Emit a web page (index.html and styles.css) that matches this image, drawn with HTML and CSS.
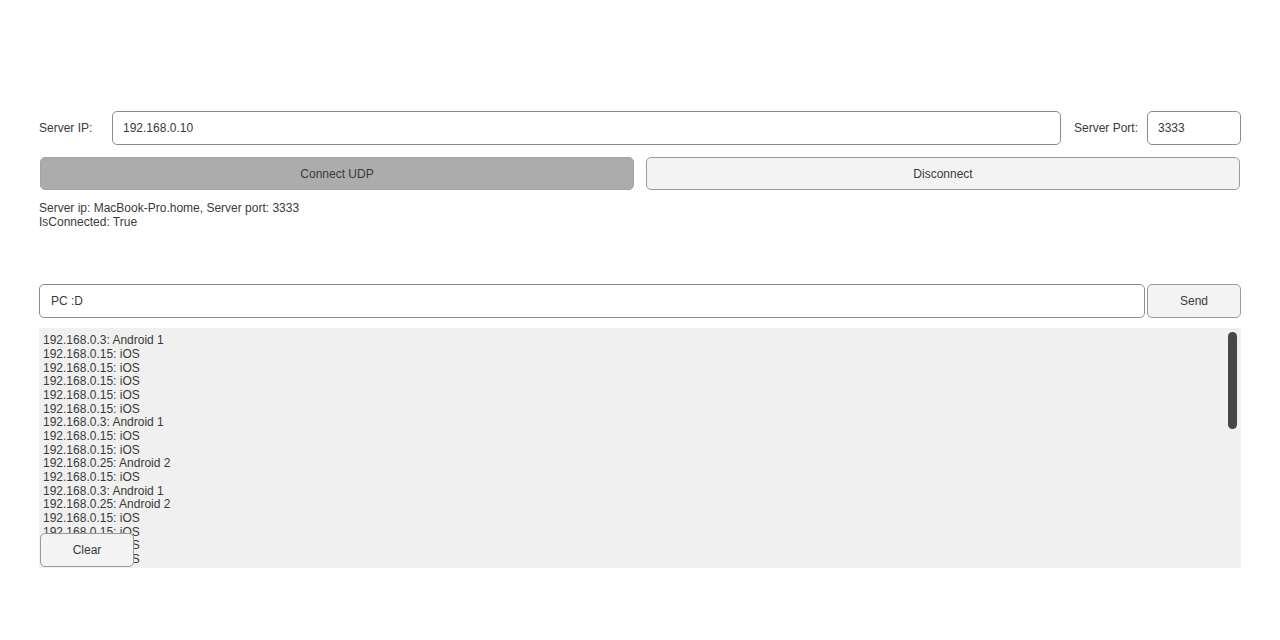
FILE: index.html
```html
<!DOCTYPE html>
<html>
<head>
<meta charset="utf-8">
<link rel="stylesheet" href="styles.css">
</head>
<body>
<main class="app">
  <div class="row server-row">
    <label class="lbl lbl-ip">Server IP:</label>
    <input class="field field-ip" type="text" value="192.168.0.10">
    <label class="lbl lbl-port">Server Port:</label>
    <input class="field field-port" type="text" value="3333">
  </div>
  <div class="btn-row">
    <button class="btn btn-active">Connect UDP</button>
    <button class="btn">Disconnect</button>
  </div>
  <div class="status">
    <div>Server ip: MacBook-Pro.home, Server port: 3333</div>
    <div>IsConnected: True</div>
  </div>
  <div class="row msg-row">
    <input class="field field-msg" type="text" value="PC :D">
    <button class="btn btn-send">Send</button>
  </div>
  <div class="log">
    <div class="log-lines">
      <div>192.168.0.3: Android 1</div>
      <div>192.168.0.15: iOS</div>
      <div>192.168.0.15: iOS</div>
      <div>192.168.0.15: iOS</div>
      <div>192.168.0.15: iOS</div>
      <div>192.168.0.15: iOS</div>
      <div>192.168.0.3: Android 1</div>
      <div>192.168.0.15: iOS</div>
      <div>192.168.0.15: iOS</div>
      <div>192.168.0.25: Android 2</div>
      <div>192.168.0.15: iOS</div>
      <div>192.168.0.3: Android 1</div>
      <div>192.168.0.25: Android 2</div>
      <div>192.168.0.15: iOS</div>
      <div>192.168.0.15: iOS</div>
      <div>192.168.0.15: iOS</div>
      <div>192.168.0.15: iOS</div>
      <div>192.168.0.3: Android 1</div>
      <div>192.168.0.15: iOS</div>
    </div>
    <div class="scrollbar"></div>
    <button class="btn btn-clear">Clear</button>
  </div>
</main>
</body>
</html>
```
FILE: styles.css
```css
* { box-sizing: border-box; }
html, body { margin: 0; padding: 0; background: #ffffff; }
body {
  font-family: "Liberation Sans", Arial, sans-serif;
  font-size: 12px;
  color: #3a3a3a;
}
.app {
  width: 1202px;
  margin-left: 39px;
  padding-top: 111px;
}
.row {
  display: flex;
  align-items: center;
}
.server-row { height: 34px; }
.lbl { white-space: nowrap; color: #3a3a3a; }
.lbl-ip { width: 73px; flex: none; }
.lbl-port { width: 64px; flex: none; margin-left: 13px; margin-right: 9px; }
.field {
  height: 34px;
  border: 1px solid #8c8c8c;
  border-radius: 5px;
  background: #ffffff;
  font-family: "Liberation Sans", Arial, sans-serif;
  font-size: 12px;
  color: #3a3a3a;
  padding: 0 10px;
  outline: none;
}
.field-ip { flex: 1; min-width: 0; }
.field-port { width: 94px; flex: none; }
.btn-row {
  display: grid;
  grid-template-columns: 1fr 1fr;
  gap: 12px;
  margin-top: 12px;
  padding: 0 1px;
}
.btn {
  height: 33px;
  border: 1px solid #9a9a9a;
  border-radius: 5px;
  background: #f3f3f3;
  font-family: "Liberation Sans", Arial, sans-serif;
  font-size: 12px;
  color: #3a3a3a;
  padding: 0;
}
.btn-active {
  background: #acacac;
  border-color: #a4a4a4;
}
.status {
  margin-top: 12px;
  line-height: 13.7px;
}
.msg-row {
  margin-top: 55px;
  height: 34px;
  gap: 2px;
}
.field-msg { flex: 1; min-width: 0; padding-left: 11px; }
.btn-send { width: 94px; height: 34px; flex: none; }
.log {
  position: relative;
  margin-top: 10px;
  height: 240px;
  background: #f0f0f0;
  overflow: hidden;
}
.log-lines {
  padding: 6px 0 0 4px;
  line-height: 13.67px;
}
.scrollbar {
  position: absolute;
  top: 4px;
  right: 4px;
  width: 9px;
  height: 97px;
  border-radius: 5px;
  background: #474747;
}
.btn-clear {
  position: absolute;
  left: 1px;
  bottom: 1px;
  width: 94px;
  height: 34px;
  background: #f4f4f4;
}
```
